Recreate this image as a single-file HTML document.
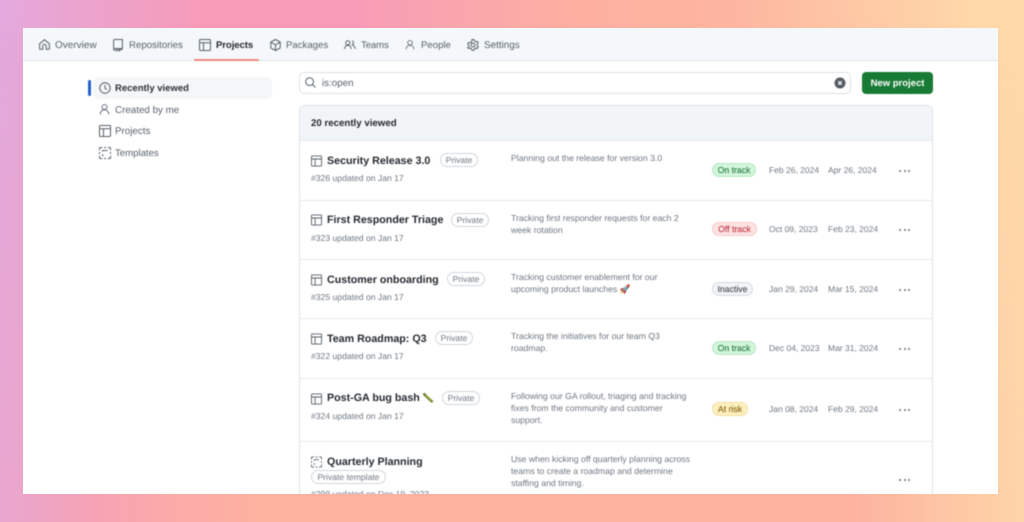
<!DOCTYPE html>
<html lang="en"><head><meta charset="utf-8"><title>Projects</title>
<style>
*{box-sizing:border-box}
html,body{margin:0;padding:0;width:1024px;height:522px;overflow:hidden}
body{position:relative;font-family:"Liberation Sans",sans-serif;text-rendering:geometricPrecision;background:linear-gradient(90deg,#e3a9dd 0,#f69bb8 200px,#f79cb8 350px,#fdb0a0 580px,#fdb4a0 720px,#fed9a9 980px)}
#bg{position:absolute;inset:0;background:linear-gradient(90deg,#e8a6d0 0,#f5a3b5 90px,#fcaaa8 170px,#fdb2a0 260px,#fdb2a0 850px,#fed5a8 1024px);-webkit-mask-image:linear-gradient(180deg,transparent 0,transparent 20px,#000 490px);mask-image:linear-gradient(180deg,transparent 0,transparent 20px,#000 490px)}
#p{position:absolute;left:23px;top:28px;width:975px;height:466px;background:#fff;overflow:hidden}
#w{position:absolute;left:-23px;top:-28px;width:1024px;height:522px;filter:blur(.4px)}
.t{position:absolute;white-space:nowrap;line-height:14px;color:#57606a;font-size:9.8px}
.b{font-weight:700;color:#24292f}
.h{font-size:10.7px;font-weight:700;color:#24292f}
.d{font-size:8.7px;color:#6e7781;line-height:12px}
.s{font-size:8.6px;color:#6e7781}
.m{font-size:8.5px;color:#6e7781}
.pill{position:absolute;height:14px;border:1px solid #d0d7de;border-radius:7px;font-size:8.6px;line-height:12px;color:#6e7781;text-align:center;white-space:nowrap}
.st{position:absolute;height:14px;border:1px solid;border-radius:7px;font-size:8.7px;line-height:12px;text-align:center;white-space:nowrap;-webkit-text-stroke:.15px currentColor}
.r{position:absolute;left:300px;width:632px;height:1px;background:#e4e8ec}
svg{position:absolute;fill:none;stroke:#57606a;stroke-width:1;overflow:visible}
.dots{position:absolute;left:899px;width:11px;height:2px;display:flex;justify-content:space-between}
.dots i{width:2px;height:2px;border-radius:1px;background:#656d76}
</style></head><body>
<div id="bg"></div>
<div id="p"><div id="w">
<svg width="0" height="0" style="position:absolute"><defs>
<symbol id="tb" viewBox="0 0 12 12"><path d="M1.2.5h9.6a.7.7 0 0 1 .7.7v9.6a.7.7 0 0 1-.7.7H1.200a.7.7 0 0 1-.7-.7V1.200a.7.7 0 0 1 .7-.7zM.5 3.800h11M4.500 3.800v7.700" fill="none"/></symbol>
<symbol id="tp" viewBox="0 0 12 12"><path d="M.5 3.300V1.300a.8.8 0 0 1 .8-.8h2M5 .5h2M8.700.5h2a.8.8 0 0 1 .8.8v2M11.500 5v2M11.500 8.700v2a.8.8 0 0 1-.8.8h-2M7 11.500H5M3.300 11.500h-2a.8.8 0 0 1-.8-.8v-2M.5 7V5M3.500 3.500h5M3.500 3.500v1.200M3.500 7.300v1.200h1" fill="none"/></symbol>
<symbol id="pe" viewBox="0 0 12 12"><circle cx="6" cy="3.300" r="2.700" fill="none"/><path d="M1.300 11.300c0-3 2-5 4.700-5s4.700 2 4.700 5" fill="none"/></symbol>
</defs></svg>

<!-- Header -->
<div style="position:absolute;left:23px;top:28px;width:975px;height:33px;background:#f5f8fa;border-bottom:1px solid #dfe3e7"></div>
<svg style="left:39px;top:39px" width="11" height="11" viewBox="0 0 11 11"><path d="M.6 4.700 5.500.7l4.900 4v5a.6.600 0 0 1-.6.600H7.200V7a1.700 1.700 0 0 0-3.400 0v3.300H1.200a.6.600 0 0 1-.6-.600z"/></svg>
<span class="t" style="left:55px;top:39px;font-size:10px">Overview</span>
<svg style="left:113px;top:39px" width="10" height="12" viewBox="0 0 10 12"><path d="M.6 9.300V1.500A1 1 0 0 1 1.600.5h7.800v9H1.500a.9.9 0 0 0-.9.900v0a.9.9 0 0 0 .9.900h1M7 10.600h2.400M3.500 9.500h3v2.300l-1.500-1-1.500 1z"/></svg>
<span class="t" style="left:129px;top:39px;font-size:9.7px">Repositories</span>
<svg style="left:199px;top:39px" width="12" height="12"><use href="#tb"/></svg>
<span class="t b" style="left:216px;top:39px;font-size:9.6px;letter-spacing:-.1px">Projects</span>
<div style="position:absolute;left:194px;top:59px;width:65px;height:2px;background:#f0877c;border-radius:1px"></div>
<svg style="left:270px;top:39px" width="11" height="12" viewBox="0 0 11 12"><path d="M5.500.5l4.700 2.600v5.800L5.500 11.500.8 8.900V3.100zM.9 3.200l4.600 2.600 4.600-2.600M5.500 5.800v5.600"/></svg>
<span class="t" style="left:286px;top:39px;font-size:9.6px">Packages</span>
<svg style="left:344px;top:40px" width="12" height="10" viewBox="0 0 12 10"><circle cx="3.800" cy="2.800" r="2.100"/><path d="M.5 9c0-2.200 1.400-3.600 3.300-3.600S7.100 6.800 7.100 9M8 .8c1 .3 1.500 1.100 1.500 2S9 4.500 8.300 4.900c1.600.7 2.700 2 3 4"/></svg>
<span class="t" style="left:361px;top:39px;font-size:9.6px;letter-spacing:-.1px">Teams</span>
<svg style="left:405px;top:40px" width="10" height="10"><use href="#pe"/></svg>
<span class="t" style="left:421px;top:39px;font-size:9.6px">People</span>
<svg style="left:467px;top:39px" width="12" height="12" viewBox="0 0 12 12"><circle cx="6" cy="6" r="1.900"/><path d="M4.900.6h2.200l.4 1.600 1.100.6 1.600-.5 1.100 1.900-1.200 1.100v1.300l1.200 1.100-1.100 1.900-1.600-.5-1.100.6-.4 1.600H4.900l-.4-1.600-1.100-.6-1.600.5L.7 8.700l1.200-1.100V6.300L.7 5.200l1.100-1.900 1.600.5 1.100-.6z"/></svg>
<span class="t" style="left:484px;top:39px;font-size:9.9px">Settings</span>

<!-- Sidebar -->
<div style="position:absolute;left:88px;top:80px;width:3px;height:16px;background:#2563c9;border-radius:2px"></div>
<div style="position:absolute;left:93px;top:77px;width:179px;height:22px;background:#f5f6f8;border-radius:5px"></div>
<svg style="left:99px;top:82px" width="12" height="12" viewBox="0 0 12 12"><circle cx="6" cy="6" r="5.200"/><path d="M6 3v3.300l2 1.100"/></svg>
<span class="t b" style="left:115px;top:82px;color:#2b3138;font-size:9.5px">Recently viewed</span>
<svg style="left:99px;top:104px" width="11" height="11"><use href="#pe"/></svg>
<span class="t" style="left:115px;top:104px">Created by me</span>
<svg style="left:99px;top:125px" width="12" height="12"><use href="#tb"/></svg>
<span class="t" style="left:115px;top:125px">Projects</span>
<svg style="left:99px;top:147px" width="12" height="12"><use href="#tp"/></svg>
<span class="t" style="left:115px;top:147px;font-size:9.6px">Templates</span>

<!-- Search -->
<div style="position:absolute;left:299px;top:72px;width:552px;height:22px;border:1px solid #dde1e6;border-radius:5px;background:#fff"></div>
<svg style="left:305px;top:77px" width="11" height="11" viewBox="0 0 11 11"><circle cx="4.600" cy="4.600" r="3.900"/><path d="M7.500 7.500l3 3"/></svg>
<span class="t" style="left:322px;top:77px">is:open</span>
<svg style="left:834px;top:77px;stroke:none" width="12" height="12" viewBox="0 0 12 12"><circle cx="6" cy="6" r="5.500" fill="#535a64"/><path d="M4.200 4.200l3.600 3.600M7.800 4.200L4.200 7.800" stroke="#fff" stroke-width="1.200"/></svg>
<div style="position:absolute;left:862px;top:72px;width:71px;height:22px;background:#177a35;border-radius:4px;color:#fff;font-size:9.5px;font-weight:700;line-height:23px;text-align:center">New project</div>

<!-- List -->
<div style="position:absolute;left:299px;top:105px;width:634px;height:420px;border:1px solid #dfe3e7;border-radius:5px 5px 0 0"></div>
<div style="position:absolute;left:300px;top:106px;width:632px;height:35px;background:#f2f5f8;border-radius:4px 4px 0 0;border-bottom:1px solid #e4e8ec"></div>
<span class="t b" style="left:311px;top:117px;font-size:9.7px">20 recently viewed</span>

<div class="r" style="top:200px"></div>
<div class="r" style="top:259px"></div>
<div class="r" style="top:318px"></div>
<div class="r" style="top:378px"></div>
<div class="r" style="top:441px"></div>

<!-- Row 1 -->
<svg style="left:311px;top:155px" width="11" height="12"><use href="#tb"/></svg>
<span class="t h" style="left:327px;top:154px">Security Release 3.0</span>
<div class="pill" style="left:440px;top:153px;width:38px">Private</div>
<span class="t s" style="left:311px;top:171px">#326 updated on Jan 17</span>
<span class="t d" style="left:511px;top:152px">Planning out the release for version 3.0</span>
<div class="st" style="left:712px;top:163px;width:44px;background:#d3f5dc;border-color:#b5e8c4;color:#2c8048">On track</div>
<span class="t m" style="left:769px;top:163px">Feb 26, 2024</span>
<span class="t m" style="left:828px;top:163px">Apr 26, 2024</span>
<div class="dots" style="top:170px"><i></i><i></i><i></i></div>

<!-- Row 2 -->
<svg style="left:311px;top:214px" width="11" height="12"><use href="#tb"/></svg>
<span class="t h" style="left:327px;top:213px">First Responder Triage</span>
<div class="pill" style="left:451px;top:213px;width:38px">Private</div>
<span class="t s" style="left:311px;top:231px">#323 updated on Jan 17</span>
<span class="t d" style="left:511px;top:212px">Tracking first responder requests for each 2<br>week rotation</span>
<div class="st" style="left:712px;top:222px;width:45px;background:#fde3e3;border-color:#f9c9c9;color:#c23a48">Off track</div>
<span class="t m" style="left:769px;top:222px">Oct 09, 2023</span>
<span class="t m" style="left:828px;top:222px">Feb 23, 2024</span>
<div class="dots" style="top:229px"><i></i><i></i><i></i></div>

<!-- Row 3 -->
<svg style="left:311px;top:274px" width="11" height="12"><use href="#tb"/></svg>
<span class="t h" style="left:327px;top:273px">Customer onboarding</span>
<div class="pill" style="left:447px;top:272px;width:38px">Private</div>
<span class="t s" style="left:311px;top:290px">#325 updated on Jan 17</span>
<span class="t d" style="left:511px;top:271px">Tracking customer enablement for our<br>upcoming product launches 🚀</span>
<div class="st" style="left:712px;top:282px;width:41px;background:#f2f4f7;border-color:#d5dae0;color:#4c545e">Inactive</div>
<span class="t m" style="left:769px;top:282px">Jan 29, 2024</span>
<span class="t m" style="left:828px;top:282px">Mar 15, 2024</span>
<div class="dots" style="top:289px"><i></i><i></i><i></i></div>

<!-- Row 4 -->
<svg style="left:311px;top:333px" width="11" height="12"><use href="#tb"/></svg>
<span class="t h" style="left:327px;top:332px">Team Roadmap: Q3</span>
<div class="pill" style="left:435px;top:331px;width:38px">Private</div>
<span class="t s" style="left:311px;top:349px">#322 updated on Jan 17</span>
<span class="t d" style="left:511px;top:330px">Tracking the initiatives for our team Q3<br>roadmap.</span>
<div class="st" style="left:712px;top:341px;width:44px;background:#d3f5dc;border-color:#b5e8c4;color:#2c8048">On track</div>
<span class="t m" style="left:769px;top:341px">Dec 04, 2023</span>
<span class="t m" style="left:828px;top:341px">Mar 31, 2024</span>
<div class="dots" style="top:348px"><i></i><i></i><i></i></div>

<!-- Row 5 -->
<svg style="left:311px;top:393px" width="11" height="12"><use href="#tb"/></svg>
<span class="t h" style="left:327px;top:391px">Post-GA bug bash</span>
<svg style="left:423px;top:393px;stroke:none" width="10" height="10" viewBox="0 0 10 10"><path d="M1.300 1.300L8.700 8.300" stroke="#6f7f2e" stroke-width="2.600" stroke-linecap="round"/><path d="M3 2.300L8.200 7.200" stroke="#a8b948" stroke-width="1" stroke-linecap="round"/></svg>
<div class="pill" style="left:442px;top:391px;width:38px">Private</div>
<span class="t s" style="left:311px;top:409px">#324 updated on Jan 17</span>
<span class="t d" style="left:511px;top:390px">Following our GA rollout, triaging and tracking<br>fixes from the community and customer<br>support.</span>
<div class="st" style="left:712px;top:402px;width:36px;background:#fdf0bf;border-color:#f3df9f;color:#8f6a17">At risk</div>
<span class="t m" style="left:769px;top:402px">Jan 08, 2024</span>
<span class="t m" style="left:828px;top:402px">Feb 29, 2024</span>
<div class="dots" style="top:409px"><i></i><i></i><i></i></div>

<!-- Row 6 -->
<svg style="left:311px;top:456px" width="11" height="12"><use href="#tp"/></svg>
<span class="t h" style="left:327px;top:455px">Quarterly Planning</span>
<div class="pill" style="left:311px;top:470px;width:75px">Private template</div>
<span class="t s" style="left:311px;top:487px">#299 updated on Dec 19, 2023</span>
<span class="t d" style="left:511px;top:453px">Use when kicking off quarterly planning across<br>teams to create a roadmap and determine<br>staffing and timing.</span>
<div class="dots" style="top:479px"><i></i><i></i><i></i></div>
</div></div>
</body></html>
